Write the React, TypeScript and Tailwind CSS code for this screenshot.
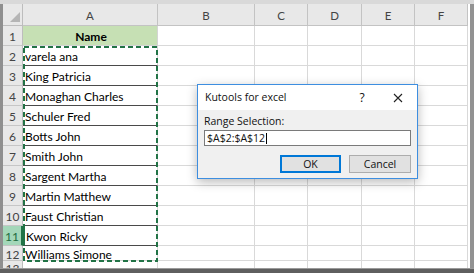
import React from "react";

const cols = ["w-[20px]", "w-[135px]", "w-[97px]", "w-[53px]", "w-[54px]", "w-[53px]", "w-[53px]"];
const letters = ["A", "B", "C", "D", "E", "F"];
const names = [
  "varela ana",
  "King Patricia",
  "Monaghan Charles",
  "Schuler Fred",
  "Botts John",
  "Smith John",
  "Sargent Martha",
  "Martin Matthew",
  "Faust Christian",
  "Kwon Ricky",
  "Williams Simone",
];

function Row({
  num,
  h,
  a,
  header,
  active,
  aBorder,
}: {
  num: number;
  h: string;
  a?: string;
  header?: boolean;
  active?: boolean;
  aBorder: string;
}) {
  return (
    <div className={`flex ${h}`}>
      <div
        className={`${cols[0]} shrink-0 flex items-center justify-center pt-[3px] border-b text-[12px] ${
          active
            ? "bg-[#a3d7b9] text-[#1d6b40] border-b-[#c3c3c3] border-r-2 border-r-[#217346]"
            : "bg-[#e8e8e8] text-[#444] border-b-[#c6c6c6] border-r border-r-[#bdbdbd]"
        }`}
      >
        {num}
      </div>
      <div
        className={`${cols[1]} shrink-0 flex items-center pt-[3px] border-r border-r-[#d4d4d4] border-b ${aBorder} ${
          header ? "bg-[#c6e0b4] justify-center font-bold" : "bg-white"
        } ${active ? "border-l-2 border-l-[#217346] pl-[1px]" : "pl-[2px]"} text-[12px] text-black whitespace-nowrap overflow-hidden`}
      >
        {a}
      </div>
      {cols.slice(2).map((c, i) => (
        <div key={i} className={`${c} shrink-0 bg-white border-r border-b border-[#d9d9d9]`} />
      ))}
    </div>
  );
}

export default function App() {
  return (
    <div className="relative w-[474px] h-[273px] overflow-hidden bg-white font-[Lato,sans-serif] flex flex-col">
      <div className="h-[4px] bg-[#d9d9d9] shrink-0" />
      <div className="flex flex-1 min-h-0">
        <div className="w-[3px] bg-[#8f8f8f] shrink-0" />
        <div className="flex flex-col w-[465px] shrink-0">
          {/* column header */}
          <div className="flex h-[22px] shrink-0">
            <div className={`${cols[0]} shrink-0 bg-[#e8e8e8] border-r border-b border-[#bdbdbd] flex items-end justify-end pr-[2px] pb-[3px]`}>
              <svg width="10" height="10" viewBox="0 0 10 10">
                <polygon points="10,0 10,10 0,10" fill="#b5b5b5" />
              </svg>
            </div>
            {letters.map((l, i) => (
              <div
                key={l}
                className={`${cols[i + 1]} shrink-0 bg-[#e8e8e8] border-r border-b border-[#c3c3c3] flex items-center justify-center pt-[3px] text-[11.5px] text-[#444]`}
              >
                {l}
              </div>
            ))}
          </div>
          <Row num={1} h="h-[20px]" a="Name" header aBorder="border-b-[#d4d4d4]" />
          {names.map((n, i) => (
            <Row
              key={n}
              num={i + 2}
              h={i === 10 ? "h-[15px]" : "h-[20px]"}
              a={n}
              active={i === 9}
              aBorder={i === 10 ? "border-b-[#d4d4d4]" : "border-b-[#4a4a4a]"}
            />
          ))}
          <div className="flex flex-1 min-h-0 overflow-hidden">
            <div className={`${cols[0]} shrink-0 bg-[#e8e8e8] border-r border-[#bdbdbd] flex justify-center text-[12px] text-[#444] leading-[14px] pt-[1px]`}>
              13
            </div>
            {cols.slice(1).map((c, i) => (
              <div key={i} className={`${c} shrink-0 bg-white border-r border-[#d9d9d9]`} />
            ))}
          </div>
        </div>
        <div className="w-[2px] bg-white shrink-0" />
        <div className="w-[4px] bg-[#929292] shrink-0" />
      </div>
      <div className="h-[5px] bg-[#5f5f5f] border-t border-[#9a9a9a] shrink-0" />

      {/* copy marquee */}
      <svg className="absolute inset-0 pointer-events-none" width="474" height="273">
        <rect x="24" y="47" width="133" height="214" fill="none" stroke="#217346" strokeWidth="2" strokeDasharray="5 3" />
      </svg>

      {/* dialog */}
      <div className="absolute left-[197px] top-[84px] w-[221px] h-[95px] bg-[#f0f0f0] border border-[#3d8ee0] shadow-[0_3px_10px_rgba(0,0,0,0.28)] flex flex-col font-['Open_Sans',sans-serif] text-[10.5px] text-[#111]">
        <div className="h-[25px] bg-white flex items-center pl-[7px] shrink-0">
          <span className="flex-1">Kutools for excel</span>
          <span className="w-[14px] text-center mr-[24px] text-[12px]">?</span>
          <svg width="10" height="10" viewBox="0 0 10 10" className="mr-[14px]">
            <path d="M1 1 L9 9 M9 1 L1 9" stroke="#222" strokeWidth="1.1" />
          </svg>
        </div>
        <div className="flex flex-col px-[6px] pt-[4px]">
          <div className="leading-[14px]">Range Selection:</div>
          <div className="mt-[2px] h-[16px] bg-white border border-[#7a7a7a] flex items-center pl-[2px] leading-none">
            $A$2:$A$12
            <span className="inline-block w-px h-[11px] bg-black ml-px" />
          </div>
          <div className="flex justify-end gap-[8px] mt-[9px]">
            <button className="w-[61px] h-[18px] bg-[#e1e1e1] border-2 border-[#0078d7] flex items-center justify-center leading-none">
              OK
            </button>
            <button className="w-[62px] h-[18px] bg-[#e1e1e1] border border-[#adadad] flex items-center justify-center leading-none">
              Cancel
            </button>
          </div>
        </div>
      </div>
    </div>
  );
}
